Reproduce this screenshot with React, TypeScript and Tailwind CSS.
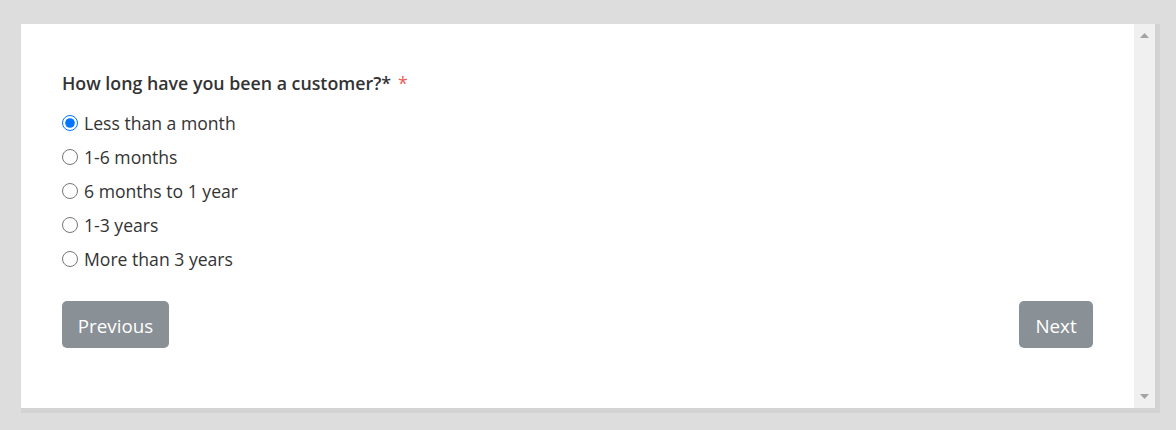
import { useState } from 'react';

const options = [
  'Less than a month',
  '1-6 months',
  '6 months to 1 year',
  '1-3 years',
  'More than 3 years',
];

export default function App() {
  const [value, setValue] = useState(options[0]);

  return (
    <div
      className="min-h-[430px] bg-[#dddddd] pt-[24px] pl-[21px]"
      style={{ fontFamily: '"Open Sans", "Noto Sans", sans-serif' }}
    >
      <div className="flex h-[389px] w-[1139px] border-r-[5px] border-b-[5px] border-[#d3d3d3]">
        {/* Survey body */}
        <div className="flex-1 bg-white pl-[41px] pr-[41px] pt-[46px]">
          <label className="block text-[17.8px] font-semibold text-[#333333] leading-[26px]">
            How long have you been a customer?*
            <span className="ml-[7px] font-normal text-[#e85c5c]">*</span>
          </label>

          <div className="mt-[10px] flex flex-col">
            {options.map((opt) => (
              <label
                key={opt}
                className="flex h-[34px] items-center text-[17.6px] text-[#333333]"
              >
                <input
                  type="radio"
                  name="tenure"
                  checked={value === opt}
                  onChange={() => setValue(opt)}
                  className="m-0 mr-[6px] h-[16px] w-[16px] accent-[#0075ff]"
                />
                {opt}
              </label>
            ))}
          </div>

          <div className="mt-[25px] flex items-center justify-between">
            <button
              type="button"
              className="h-[47px] w-[107px] rounded-[5px] bg-[#899096] pt-[3px] text-[18.8px] text-white"
            >
              Previous
            </button>
            <button
              type="button"
              className="h-[47px] w-[74px] rounded-[5px] bg-[#899096] pt-[3px] text-[18.8px] text-white"
            >
              Next
            </button>
          </div>
        </div>

        {/* Scrollbar */}
        <div className="flex w-[21px] flex-col items-center justify-between bg-[#f0f0f0] py-[9px]">
          <svg width="9" height="5" viewBox="0 0 9 5">
            <polygon points="4.5,0 9,5 0,5" fill="#a3a3a3" />
          </svg>
          <svg width="9" height="5" viewBox="0 0 9 5">
            <polygon points="0,0 9,0 4.5,5" fill="#a3a3a3" />
          </svg>
        </div>
      </div>
    </div>
  );
}
